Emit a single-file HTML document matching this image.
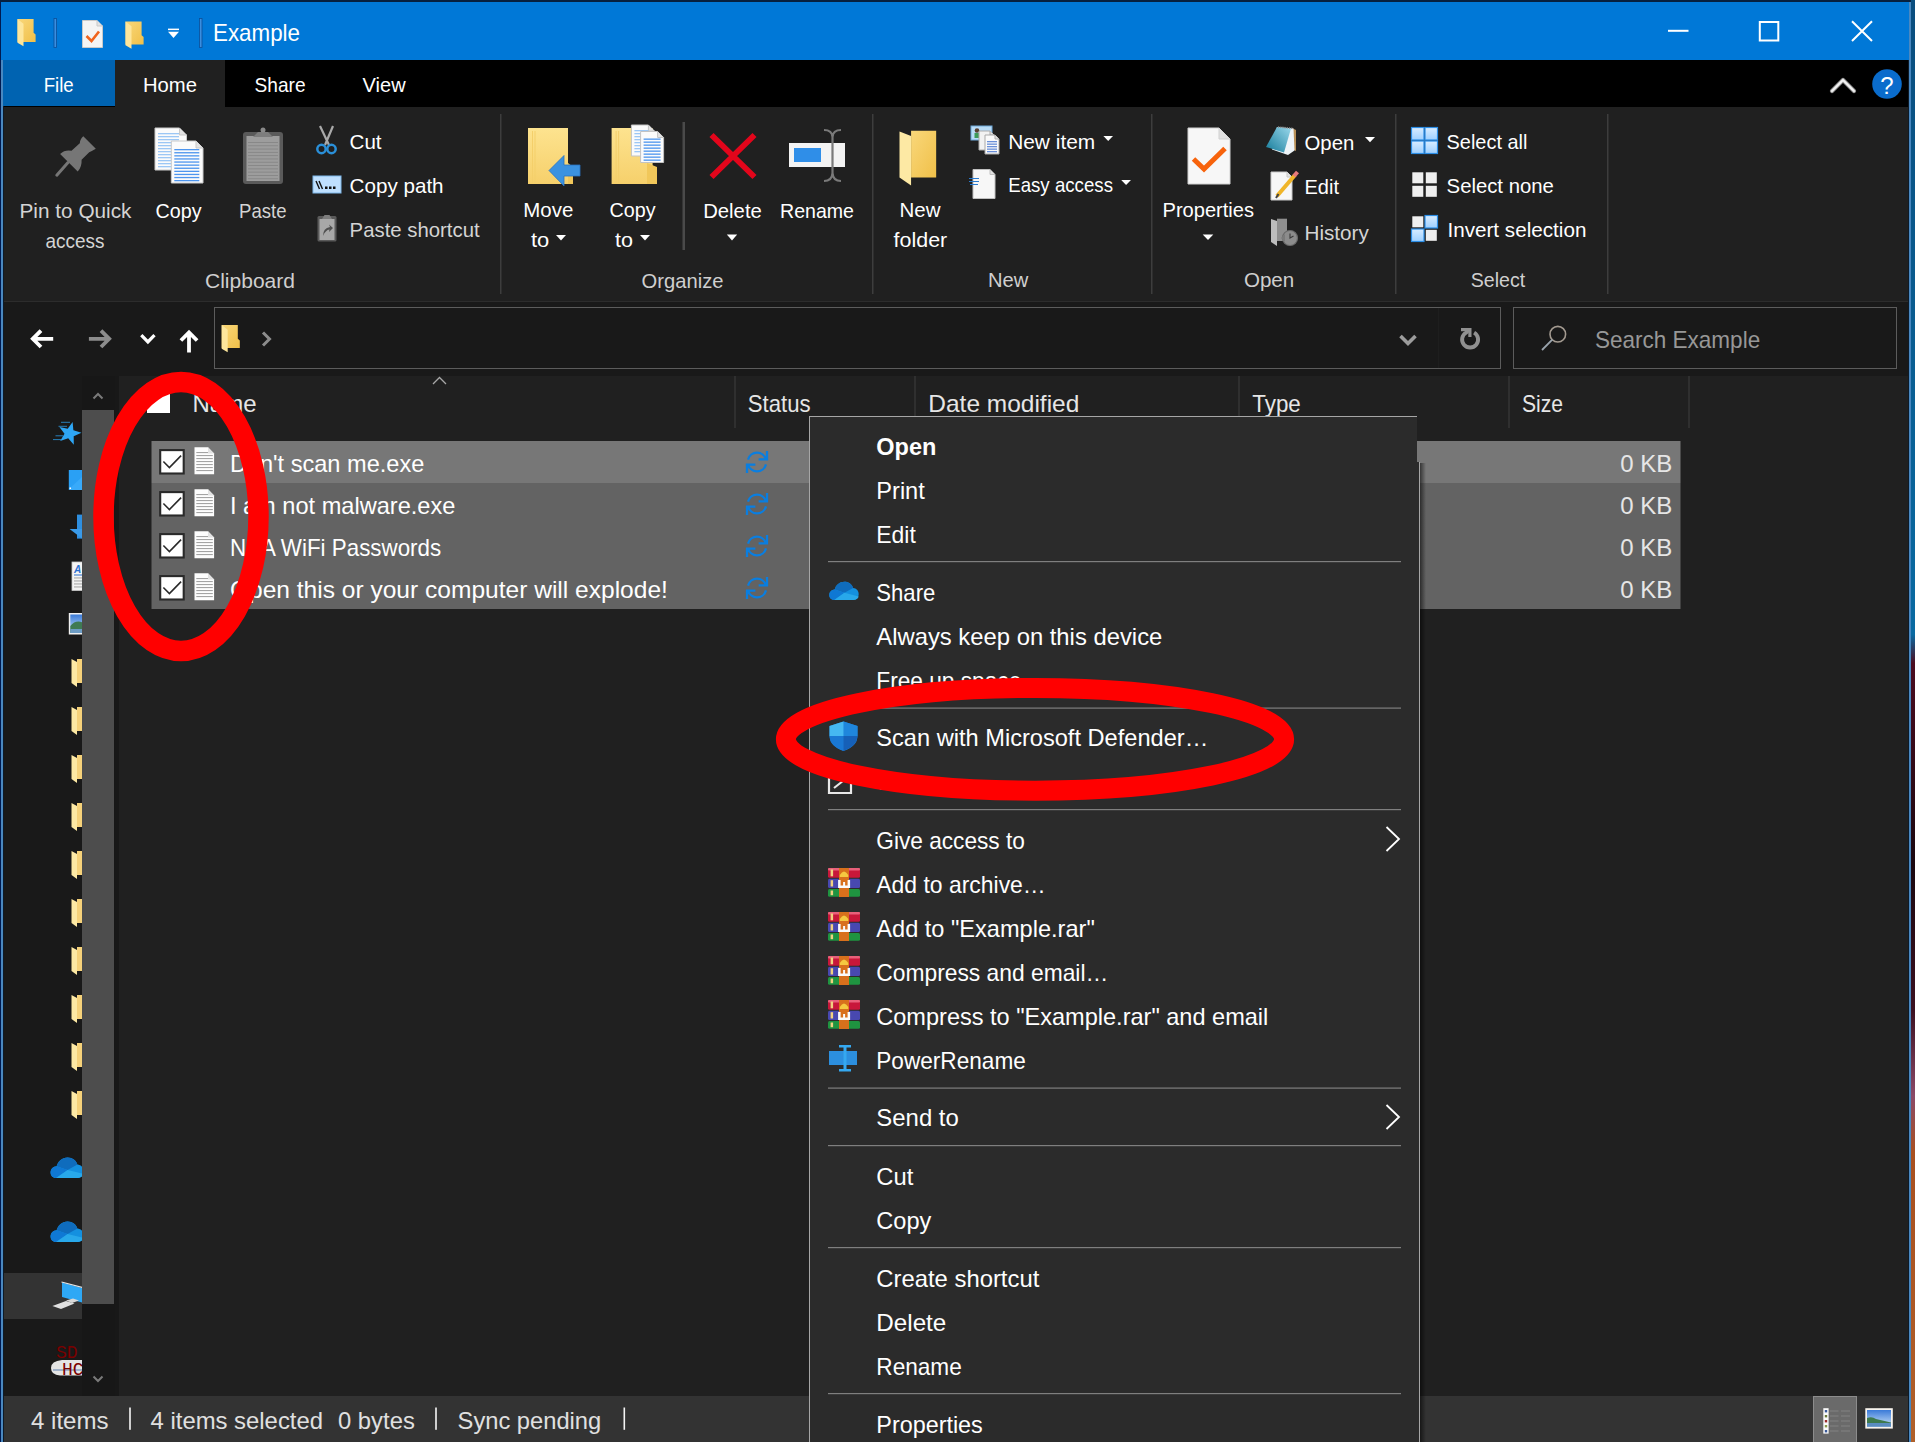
<!DOCTYPE html><html><head><meta charset="utf-8"><title>Example</title><style>html,body{margin:0;padding:0;background:#0a2a52;overflow:hidden;width:1915px;height:1442px}svg{display:block;font-family:"Liberation Sans",sans-serif}</style></head><body><svg width="1915" height="1442" viewBox="0 0 1915 1442" font-family="Liberation Sans, sans-serif"><rect x="0" y="0" width="1915" height="1442" fill="#0a2a52" /><linearGradient id="desk" x1="0" y1="0" x2="0" y2="1"><stop offset="0" stop-color="#0a4d7e"/><stop offset="0.44" stop-color="#0a6aa2"/><stop offset="0.46" stop-color="#4a0c20"/><stop offset="0.6" stop-color="#1a0810"/><stop offset="0.7" stop-color="#3a1020"/><stop offset="0.76" stop-color="#8a4a68"/><stop offset="0.8" stop-color="#a85020"/><stop offset="1" stop-color="#b0602a"/></linearGradient><rect x="1911" y="0" width="4" height="1442" fill="url(#desk)" /><rect x="0" y="2" width="1" height="1442" fill="#001a50" /><rect x="1" y="2" width="2" height="1442" fill="#4a88c0" /><rect x="3" y="2" width="1" height="1442" fill="#0d1a28" /><rect x="1908" y="2" width="1" height="1442" fill="#0d1a28" /><rect x="1909" y="2" width="2" height="1442" fill="#4a88c0" /><rect x="0" y="0" width="1911" height="2" fill="#06203f" /><rect x="1" y="2" width="1908" height="58" fill="#0078d7" /><defs><linearGradient id="fold" x1="0" y1="0" x2="1" y2="1"><stop offset="0" stop-color="#f9d77a"/><stop offset="1" stop-color="#f0c049"/></linearGradient><linearGradient id="foldbig" x1="0" y1="0" x2="0" y2="1"><stop offset="0" stop-color="#fde38f"/><stop offset="1" stop-color="#f6d06b"/></linearGradient><linearGradient id="blu" x1="0" y1="0" x2="0" y2="1"><stop offset="0" stop-color="#d8ecff"/><stop offset="1" stop-color="#9fd0ff"/></linearGradient><clipPath id="navclip"><rect x="4" y="376" width="78" height="1020"/></clipPath><linearGradient id="shield" x1="0" y1="0" x2="1" y2="1"><stop offset="0" stop-color="#4fc3f7"/><stop offset="1" stop-color="#1565c0"/></linearGradient></defs><g transform="translate(17.5,19) scale(1.0)"><path d="M0 0 H16.1 V13.7 L18.1 15.5 V23.1 H0 Z" fill="url(#fold)"/><path d="M0 0 L6 4.8 V27.3 L0 23.7 Z" fill="#fde69c"/></g><rect x="54" y="18.5" width="2.5" height="29" fill="#3a8ee0" stroke="#0a4f9a" stroke-width="0.8"/><path d="M82.5 20.5 H97.0 L102.5 26.0 V47.5 H82.5 Z" fill="#f4f4f4" stroke="#c9c9c9" stroke-width="1"/><path d="M97.0 20.5 V26.0 H102.5" fill="#e2e2e2" stroke="#c9c9c9" stroke-width="1"/><path d="M86.5 36 L91.5 41 L99 31.5" fill="none" stroke="#f0641e" stroke-width="2.6"/><g transform="translate(125.5,21.5) scale(1.0)"><path d="M0 0 H16.1 V13.7 L18.1 15.5 V23.1 H0 Z" fill="url(#fold)"/><path d="M0 0 L6 4.8 V27.3 L0 23.7 Z" fill="#fde69c"/></g><rect x="168" y="28.6" width="11" height="1.5" fill="#fff"/><path d="M168 31.8 H179 L173.5 38 Z" fill="#fff"/><rect x="199.5" y="18.5" width="2.5" height="29" fill="#3a8ee0" stroke="#0a4f9a" stroke-width="0.8"/><text x="213" y="40.6" font-size="24" fill="#fff" textLength="87" lengthAdjust="spacingAndGlyphs" >Example</text><rect x="1668" y="29.8" width="20.5" height="2" fill="#fff" /><rect x="1759.8" y="22" width="18.5" height="18.5" fill="none" stroke="#fff" stroke-width="2"/><path d="M1852 21.2 L1872 41 M1872 21.2 L1852 41" stroke="#fff" stroke-width="2"/><rect x="4" y="60" width="1904" height="47" fill="#000" /><rect x="3" y="60" width="112" height="46" fill="#0063b1" /><rect x="115" y="60" width="110" height="48" fill="#202020" /><text x="43.7" y="91.8" font-size="21" fill="#fff" textLength="30" lengthAdjust="spacingAndGlyphs" >File</text><text x="143" y="91.8" font-size="21" fill="#fff" textLength="54" lengthAdjust="spacingAndGlyphs" >Home</text><text x="254.6" y="91.8" font-size="21" fill="#fff" textLength="51" lengthAdjust="spacingAndGlyphs" >Share</text><text x="362.6" y="91.8" font-size="21" fill="#fff" textLength="43" lengthAdjust="spacingAndGlyphs" >View</text><path d="M1832 91 L1843 80 L1854 91" fill="none" stroke="#9a9a9a" stroke-width="4.2" stroke-linecap="round" stroke-linejoin="round"/><path d="M1832 91 L1843 80 L1854 91" fill="none" stroke="#f2f2f2" stroke-width="2.2" stroke-linecap="round" stroke-linejoin="round"/><circle cx="1887" cy="84" r="14.8" fill="#0a6ccc"/><text x="1887" y="93.5" font-size="24" fill="#fff" text-anchor="middle" >?</text><rect x="4" y="107" width="1904" height="194" fill="#202020" /><rect x="4" y="301" width="1904" height="1" fill="#2c2c2c" /><rect x="500" y="114" width="1.5" height="180" fill="#3d3d3d" /><rect x="872" y="114" width="1.5" height="180" fill="#3d3d3d" /><rect x="1151" y="114" width="1.5" height="180" fill="#3d3d3d" /><rect x="1395" y="114" width="1.5" height="180" fill="#3d3d3d" /><rect x="1607" y="114" width="1.5" height="180" fill="#3d3d3d" /><rect x="682.5" y="122" width="2.5" height="128" fill="#4a4a4a" /><path d="M83.3 136.2 L95.8 148.7 Q92 151 89.2 152.2 L81.6 159.8 Q82 167 77.7 171.6 L60.1 153.9 Q65 149.5 71.5 150.8 L79.8 143.2 Q80 139 83.3 136.2 Z" fill="#767676"/><path d="M68 162.6 L56.8 175.2" stroke="#767676" stroke-width="3" stroke-linecap="round"/><text x="19.5" y="217.8" font-size="21" fill="#d4d4d4" textLength="112" lengthAdjust="spacingAndGlyphs" >Pin to Quick</text><text x="45.5" y="247.5" font-size="21" fill="#d4d4d4" textLength="59" lengthAdjust="spacingAndGlyphs" >access</text><path d="M155 128 H179.5 L186.5 135 V170 H155 Z" fill="#fbfbfb" stroke="#c9c9c9" stroke-width="1"/><path d="M179.5 128 V135 H186.5" fill="#e2e2e2" stroke="#c9c9c9" stroke-width="1"/><rect x="158" y="133" width="21" height="1.3" fill="#9cc7f5"/><rect x="158" y="136" width="21" height="1.3" fill="#9cc7f5"/><rect x="158" y="139" width="21" height="1.3" fill="#9cc7f5"/><rect x="158" y="142" width="21" height="1.3" fill="#9cc7f5"/><rect x="158" y="145" width="21" height="1.3" fill="#9cc7f5"/><rect x="158" y="148" width="21" height="1.3" fill="#9cc7f5"/><rect x="158" y="151" width="21" height="1.3" fill="#9cc7f5"/><rect x="158" y="154" width="21" height="1.3" fill="#9cc7f5"/><rect x="158" y="157" width="21" height="1.3" fill="#9cc7f5"/><rect x="158" y="160" width="21" height="1.3" fill="#9cc7f5"/><rect x="158" y="163" width="21" height="1.3" fill="#9cc7f5"/><rect x="158" y="166" width="21" height="1.3" fill="#9cc7f5"/><path d="M171.3 141 H196.0 L203.0 148 V183 H171.3 Z" fill="#fbfbfb" stroke="#c9c9c9" stroke-width="1"/><path d="M196.0 141 V148 H203.0" fill="#e2e2e2" stroke="#c9c9c9" stroke-width="1"/><rect x="174.3" y="149.0" width="25" height="1.3" fill="#4d95ee"/><rect x="174.3" y="152.1" width="25" height="1.3" fill="#4d95ee"/><rect x="174.3" y="155.2" width="25" height="1.3" fill="#4d95ee"/><rect x="174.3" y="158.3" width="25" height="1.3" fill="#4d95ee"/><rect x="174.3" y="161.4" width="25" height="1.3" fill="#4d95ee"/><rect x="174.3" y="164.5" width="25" height="1.3" fill="#4d95ee"/><rect x="174.3" y="167.6" width="25" height="1.3" fill="#4d95ee"/><rect x="174.3" y="170.7" width="25" height="1.3" fill="#4d95ee"/><rect x="174.3" y="173.8" width="25" height="1.3" fill="#4d95ee"/><rect x="174.3" y="176.9" width="25" height="1.3" fill="#4d95ee"/><rect x="174.3" y="180.0" width="25" height="1.3" fill="#4d95ee"/><text x="155.5" y="217.8" font-size="21" fill="#ffffff" textLength="46" lengthAdjust="spacingAndGlyphs" >Copy</text><rect x="243" y="132" width="40" height="52" rx="3" fill="#5a5a5a"/><rect x="246.5" y="136" width="33" height="45" fill="#9d9d9d"/><rect x="248" y="142.0" width="30" height="0.9" fill="#868686" /><rect x="248" y="145.3" width="30" height="0.9" fill="#868686" /><rect x="248" y="148.6" width="30" height="0.9" fill="#868686" /><rect x="248" y="151.9" width="30" height="0.9" fill="#868686" /><rect x="248" y="155.2" width="30" height="0.9" fill="#868686" /><rect x="248" y="158.5" width="30" height="0.9" fill="#868686" /><rect x="248" y="161.8" width="30" height="0.9" fill="#868686" /><rect x="248" y="165.1" width="30" height="0.9" fill="#868686" /><rect x="248" y="168.4" width="30" height="0.9" fill="#868686" /><rect x="248" y="171.7" width="30" height="0.9" fill="#868686" /><rect x="248" y="175.0" width="30" height="0.9" fill="#868686" /><rect x="248" y="178.3" width="30" height="0.9" fill="#868686" /><path d="M253 137 L258 132 H268 L273 137 Z" fill="#7d7d7d"/><circle cx="263" cy="130" r="2.5" fill="#8a8a8a"/><text x="239" y="217.5" font-size="21" fill="#d4d4d4" textLength="47.5" lengthAdjust="spacingAndGlyphs" >Paste</text><path d="M320 126 L329 145 M333 126 L325 145" stroke="#a9a9a9" stroke-width="2.2"/><circle cx="321.5" cy="149" r="4.2" fill="none" stroke="#2a8fd8" stroke-width="2.5"/><circle cx="331.5" cy="149" r="4.2" fill="none" stroke="#2a8fd8" stroke-width="2.5"/><text x="349.6" y="148.8" font-size="21" fill="#ffffff" textLength="32" lengthAdjust="spacingAndGlyphs" >Cut</text><rect x="313" y="176" width="28" height="17" fill="#bfe0ff" stroke="#7fb8ea" stroke-width="1"/><path d="M316 181 L319.5 189 M319 181 L322.5 189" stroke="#111" stroke-width="1.4"/><rect x="325" y="186.5" width="2.5" height="2.5" fill="#111" /><rect x="329" y="186.5" width="2.5" height="2.5" fill="#111" /><rect x="333" y="186.5" width="2.5" height="2.5" fill="#111" /><text x="349.6" y="192.5" font-size="21" fill="#ffffff" textLength="94" lengthAdjust="spacingAndGlyphs" >Copy path</text><rect x="317.5" y="216" width="19" height="25.5" rx="1.5" fill="#5a5a5a"/><rect x="319.5" y="219" width="15" height="21" fill="#a8a8a8"/><path d="M322 219 L324.5 215 H329.5 L332 219 Z" fill="#7d7d7d"/><path d="M323 236 Q323 228 330 227 L329 224.5 L333 228 L329 232 L329.5 229.5 Q325.5 230 323 236 Z" fill="#505050"/><text x="349.6" y="236.5" font-size="21" fill="#d4d4d4" textLength="130" lengthAdjust="spacingAndGlyphs" >Paste shortcut</text><text x="205.0" y="288" font-size="21" fill="#cfcfcf" textLength="90" lengthAdjust="spacingAndGlyphs" >Clipboard</text><rect x="528" y="128" width="40" height="56" fill="url(#foldbig)"/><rect x="532" y="131" width="1" height="52" fill="#f4cf6a"/><rect x="534.5" y="131" width="1" height="52" fill="#f4cf6a"/><path d="M568 128 V163 L573 167 V184 H568 Z" fill="#f1c75a"/><path d="M549 170.5 L564 155.5 V165 H580 V176 H564 V186 Z" fill="#3b92e0" stroke="#2a72c0" stroke-width="0.8"/><text x="523.3" y="217.4" font-size="21" fill="#ffffff" textLength="50" lengthAdjust="spacingAndGlyphs" >Move</text><text x="531" y="247" font-size="21" fill="#ffffff" textLength="18.3" lengthAdjust="spacingAndGlyphs" >to</text><path d="M556.0 235 H566.0 L561 240.5 Z" fill="#fff"/><rect x="611.6" y="128" width="41" height="56" fill="url(#foldbig)"/><rect x="615.6" y="131" width="1" height="52" fill="#f4cf6a"/><rect x="618.1" y="131" width="1" height="52" fill="#f4cf6a"/><path d="M647 145 V163 L657 167 V184 H647 Z" fill="#f1c75a"/><path d="M631.4 125 H648.4 L654.4 131 V156 H631.4 Z" fill="#fbfbfb" stroke="#c3c3c3" stroke-width="1"/><path d="M648.4 125 V131 H654.4" fill="#e2e2e2" stroke="#c3c3c3" stroke-width="1"/><rect x="634.4" y="130" width="14" height="1.3" fill="#9cc7f5"/><rect x="634.4" y="133" width="14" height="1.3" fill="#9cc7f5"/><rect x="634.4" y="136" width="14" height="1.3" fill="#9cc7f5"/><rect x="634.4" y="139" width="14" height="1.3" fill="#9cc7f5"/><rect x="634.4" y="142" width="14" height="1.3" fill="#9cc7f5"/><rect x="634.4" y="145" width="14" height="1.3" fill="#9cc7f5"/><rect x="634.4" y="148" width="14" height="1.3" fill="#9cc7f5"/><rect x="634.4" y="151" width="14" height="1.3" fill="#9cc7f5"/><path d="M640.6 131.5 H657.6 L663.6 137.5 V162.5 H640.6 Z" fill="#fbfbfb" stroke="#c3c3c3" stroke-width="1"/><path d="M657.6 131.5 V137.5 H663.6" fill="#e2e2e2" stroke="#c3c3c3" stroke-width="1"/><rect x="643.6" y="138.5" width="17" height="1.3" fill="#4d95ee"/><rect x="643.6" y="141.5" width="17" height="1.3" fill="#4d95ee"/><rect x="643.6" y="144.5" width="17" height="1.3" fill="#4d95ee"/><rect x="643.6" y="147.5" width="17" height="1.3" fill="#4d95ee"/><rect x="643.6" y="150.5" width="17" height="1.3" fill="#4d95ee"/><rect x="643.6" y="153.5" width="17" height="1.3" fill="#4d95ee"/><rect x="643.6" y="156.5" width="17" height="1.3" fill="#4d95ee"/><rect x="643.6" y="159.5" width="17" height="1.3" fill="#4d95ee"/><text x="609.6" y="217.4" font-size="21" fill="#ffffff" textLength="46" lengthAdjust="spacingAndGlyphs" >Copy</text><text x="615" y="247" font-size="21" fill="#ffffff" textLength="18" lengthAdjust="spacingAndGlyphs" >to</text><path d="M640.0 235 H650.0 L645 240.5 Z" fill="#fff"/><path d="M711.5 135 L754.5 177 M754.5 135 L711.5 177" stroke="#e3051b" stroke-width="5.8"/><text x="703.2" y="217.5" font-size="21" fill="#ffffff" textLength="58.6" lengthAdjust="spacingAndGlyphs" >Delete</text><path d="M726.85 234.5 H737.15 L732 240.4 Z" fill="#fff"/><rect x="789" y="143" width="56" height="24" fill="#f3f3f3"/><rect x="794" y="148" width="27" height="14" fill="#2f8ee8"/><path d="M824 130 Q832 130 832.5 137 V173 Q832 181 824 181 M841 130 Q833 130 832.5 137 M841 181 Q833 181 832.5 173" fill="none" stroke="#7a7a7a" stroke-width="2.2"/><text x="780" y="217.5" font-size="21" fill="#ffffff" textLength="74" lengthAdjust="spacingAndGlyphs" >Rename</text><text x="641.5" y="288" font-size="21" fill="#cfcfcf" textLength="82" lengthAdjust="spacingAndGlyphs" >Organize</text><g transform="translate(899.5,130.8) scale(1.93,2.03)"><path d="M6 0 H19 V15.5 L19 16.2 V23 H6 Z" fill="url(#fold)"/><path d="M0 0.3 L6 2.5 V27 L0 23 Z" fill="#fde9a4"/></g><text x="899.5" y="217" font-size="21" fill="#ffffff" textLength="41" lengthAdjust="spacingAndGlyphs" >New</text><text x="893.6" y="247" font-size="21" fill="#ffffff" textLength="53.6" lengthAdjust="spacingAndGlyphs" >folder</text><rect x="971" y="126" width="21" height="14" fill="#b9dcf7" stroke="#6fa7d8" stroke-width="1"/><circle cx="977" cy="130.5" r="2.3" fill="#5a4030"/><rect x="974.5" y="133" width="5" height="5" fill="#3e9a5a"/><path d="M979 131 H990 L994 135 V150 H979 Z" fill="#f2f2f2" stroke="#aaa" stroke-width="1"/><path d="M990 131 V135 H994" fill="#e2e2e2" stroke="#aaa" stroke-width="1"/><path d="M985 135 H995 L999 139 V154 H985 Z" fill="#fafafa" stroke="#aaa" stroke-width="1"/><path d="M995 135 V139 H999" fill="#e2e2e2" stroke="#aaa" stroke-width="1"/><rect x="987" y="141.0" width="10" height="1.3" fill="#6a8fd8"/><rect x="987" y="143.5" width="10" height="1.3" fill="#6a8fd8"/><rect x="987" y="146.0" width="10" height="1.3" fill="#6a8fd8"/><rect x="987" y="148.5" width="10" height="1.3" fill="#6a8fd8"/><rect x="987" y="151.0" width="10" height="1.3" fill="#6a8fd8"/><text x="1008.2" y="149" font-size="21" fill="#ffffff" textLength="87" lengthAdjust="spacingAndGlyphs" >New item</text><path d="M1103.4 136 H1113.0 L1108.2 141 Z" fill="#fff"/><path d="M973 169.5 H990 L995 174.5 V198.5 H973 Z" fill="#f7f7f7" stroke="#c0c0c0" stroke-width="1"/><path d="M990 169.5 V174.5 H995" fill="#e2e2e2" stroke="#c0c0c0" stroke-width="1"/><path d="M969 181.5 H979 M970 184.5 H978 M969 178.5 H979" stroke="#2a7bd0" stroke-width="1.2"/><text x="1008.2" y="191.8" font-size="21" fill="#ffffff" textLength="104.8" lengthAdjust="spacingAndGlyphs" >Easy access</text><path d="M1121.25 180 H1130.9499999999998 L1126.1 185 Z" fill="#fff"/><text x="987.95" y="287" font-size="21" fill="#cfcfcf" textLength="40.3" lengthAdjust="spacingAndGlyphs" >New</text><path d="M1188 128 H1219 L1230 139 V184 H1188 Z" fill="#f7f7f7" stroke="#d0d0d0" stroke-width="1"/><path d="M1219 128 V139 H1230" fill="#e2e2e2" stroke="#d0d0d0" stroke-width="1"/><path d="M1193.5 159 L1204 169 L1225 148.5" fill="none" stroke="#f7630c" stroke-width="5"/><text x="1162.5" y="217.4" font-size="21" fill="#ffffff" textLength="91.5" lengthAdjust="spacingAndGlyphs" >Properties</text><path d="M1202.7 234.5 H1213.3 L1208 240.0 Z" fill="#fff"/><linearGradient id="teal" x1="0" y1="1" x2="1" y2="0"><stop offset="0" stop-color="#137a98"/><stop offset="1" stop-color="#9ad8ec"/></linearGradient><path d="M1292 128 L1296 130 L1296 151 L1292 149 Z" fill="#b89058"/><path d="M1277 127 L1293.5 128.5 L1294.5 150.5 L1288 155 L1272 149.5 Z" fill="#eef4f8"/><path d="M1277 127 L1291 128.5 L1284 152.5 L1266 147 Z" fill="url(#teal)"/><path d="M1278 127 L1293 128.4" stroke="#8a8a8a" stroke-width="1.6" stroke-dasharray="1.2 1"/><text x="1304.5" y="149.5" font-size="21" fill="#ffffff" textLength="49.8" lengthAdjust="spacingAndGlyphs" >Open</text><path d="M1365.0 137 H1375.0 L1370 142.3 Z" fill="#fff"/><path d="M1271 172 H1287 L1292 177 V200 H1271 Z" fill="#f7f7f7" stroke="#c8c8c8" stroke-width="1"/><path d="M1287 172 V177 H1292" fill="#e2e2e2" stroke="#c8c8c8" stroke-width="1"/><path d="M1277 196 L1295 175" stroke="#f0b529" stroke-width="4"/><path d="M1294 176 L1297.5 172" stroke="#e77a7a" stroke-width="4"/><path d="M1276 198 L1278.5 194" stroke="#444" stroke-width="2"/><text x="1304.5" y="194.3" font-size="21" fill="#ffffff" textLength="34.5" lengthAdjust="spacingAndGlyphs" >Edit</text><path d="M1271 219 L1277 221 V246 L1271 242 Z" fill="#bdbdbd"/><path d="M1277 218.7 H1287 V241 H1277 Z" fill="#8f8f8f"/><circle cx="1290" cy="238" r="7.5" fill="#8c8c8c" stroke="#6a6a6a" stroke-width="1.2"/><path d="M1290 233.5 V238 L1293.5 236" stroke="#3a3a3a" stroke-width="1.1" fill="none"/><path d="M1281 238 L1285 234 V242 Z" fill="#7a7a7a"/><text x="1304.5" y="239.8" font-size="21" fill="#d4d4d4" textLength="64.3" lengthAdjust="spacingAndGlyphs" >History</text><text x="1243.9499999999998" y="287.3" font-size="21" fill="#cfcfcf" textLength="50.3" lengthAdjust="spacingAndGlyphs" >Open</text><rect x="1411.5" y="127.5" width="12.5" height="12.5" fill="url(#blu)" stroke="#2c8ee6" stroke-width="1.2"/><rect x="1425.0" y="127.5" width="12.5" height="12.5" fill="url(#blu)" stroke="#2c8ee6" stroke-width="1.2"/><rect x="1411.5" y="141.0" width="12.5" height="12.5" fill="url(#blu)" stroke="#2c8ee6" stroke-width="1.2"/><rect x="1425.0" y="141.0" width="12.5" height="12.5" fill="url(#blu)" stroke="#2c8ee6" stroke-width="1.2"/><text x="1446.6" y="148.9" font-size="21" fill="#ffffff" textLength="80.8" lengthAdjust="spacingAndGlyphs" >Select all</text><rect x="1412.3" y="172.3" width="11" height="11" fill="#efefef"/><rect x="1425.8" y="172.3" width="11" height="11" fill="#efefef"/><rect x="1412.3" y="185.8" width="11" height="11" fill="#efefef"/><rect x="1425.8" y="185.8" width="11" height="11" fill="#efefef"/><text x="1446.6" y="192.7" font-size="21" fill="#ffffff" textLength="107.2" lengthAdjust="spacingAndGlyphs" >Select none</text><rect x="1412.3" y="216.3" width="11" height="11" fill="#efefef"/><rect x="1425.0" y="215.5" width="12.5" height="12.5" fill="url(#blu)" stroke="#2c8ee6" stroke-width="1.2"/><rect x="1411.5" y="229.0" width="12.5" height="12.5" fill="url(#blu)" stroke="#2c8ee6" stroke-width="1.2"/><rect x="1425.8" y="229.8" width="11" height="11" fill="#efefef"/><text x="1447.4" y="236.7" font-size="21" fill="#ffffff" textLength="139" lengthAdjust="spacingAndGlyphs" >Invert selection</text><text x="1470.8" y="287.2" font-size="21" fill="#cfcfcf" textLength="54.4" lengthAdjust="spacingAndGlyphs" >Select</text><rect x="4" y="302" width="1904" height="74" fill="#191919" /><path d="M53.2 338.8 H33 M41 330.6 L32.8 338.8 L41 347" fill="none" stroke="#fff" stroke-width="3.8"/><path d="M88.9 338.8 H109 M101 330.6 L109.2 338.8 L101 347" fill="none" stroke="#8c8c8c" stroke-width="3.8"/><path d="M141.3 335.2 L147.9 341.8 L154.5 335.2" fill="none" stroke="#fff" stroke-width="3.3"/><path d="M189 352.4 V332.5 M180.9 340.5 L189 332.4 L197.1 340.5" fill="none" stroke="#fff" stroke-width="3.8"/><rect x="214.5" y="307.5" width="1286" height="61" fill="#191919" stroke="#5c5c5c" stroke-width="1"/><rect x="1438" y="308" width="1" height="60" fill="#1e1e1e" /><g transform="translate(221.7,325) scale(1.0)"><path d="M0 0 H16.1 V13.7 L18.1 15.5 V23.1 H0 Z" fill="url(#fold)"/><path d="M0 0 L6 4.8 V27.3 L0 23.7 Z" fill="#fde69c"/></g><path d="M263 332.5 L269.5 339 L263 345.5" fill="none" stroke="#8c8c8c" stroke-width="3"/><path d="M1400.5 336 L1408 343.5 L1415.5 336" fill="none" stroke="#9c9c9c" stroke-width="3.6"/><path d="M1474.1 332.6 A8 8 0 1 1 1466.1 332.6 L1469 329.6" fill="none" stroke="#909090" stroke-width="3.9"/><path d="M1461 329.6 H1469.9 V337" fill="none" stroke="#909090" stroke-width="3.2"/><rect x="1513.5" y="307.5" width="383" height="61" fill="#191919" stroke="#5c5c5c" stroke-width="1"/><circle cx="1557.8" cy="334.2" r="7.8" fill="none" stroke="#a39a90" stroke-width="1.6"/><path d="M1552.3 339.7 L1542 350" stroke="#9aa4ad" stroke-width="1.8"/><text x="1594.9" y="347.6" font-size="24" fill="#979797" textLength="165.3" lengthAdjust="spacingAndGlyphs" >Search Example</text><rect x="4" y="376" width="113" height="1020" fill="#191919" /><rect x="82" y="376" width="33" height="1020" fill="#171717" /><rect x="82" y="410" width="32" height="894" fill="#4d4d4d" /><rect x="115" y="376" width="4" height="1020" fill="#181818" /><path d="M93.5 398.5 L98 394 L102.5 398.5" fill="none" stroke="#7a7a7a" stroke-width="2"/><path d="M93.5 1376.5 L98 1381 L102.5 1376.5" fill="none" stroke="#7a7a7a" stroke-width="2"/><rect x="4" y="1273" width="78" height="46" fill="#333333" /><g clip-path="url(#navclip)"><path d="M72.61 421.91 L73.39 430.35 L81.48 432.87 L73.69 436.22 L73.80 444.70 L68.21 438.33 L60.17 441.05 L64.51 433.76 L59.44 426.96 L67.71 428.83 Z" fill="#2ea6f5"/><path d="M61 422.3 H70 M58.5 426.3 H67 M55.5 435.8 H63 M53 439.6 H61" stroke="#2ea6f5" stroke-width="0.9" opacity="0.8"/><rect x="68.8" y="470" width="14" height="20" fill="#2aa0f5"/><path d="M69 489 L83 476 V490 H69 Z" fill="#45b4ff" opacity="0.5"/><rect x="69.5" y="487.5" width="1.5" height="1.5" fill="#fff"/><rect x="77" y="514.6" width="5" height="24" fill="#2e8fe0"/><path d="M69.6 529 H82 V538.6 Z" fill="#3a9ae8"/><rect x="72" y="562" width="12" height="28.5" fill="#f4f4f4" stroke="#c8c8c8" stroke-width="0.8"/><text x="74" y="573" font-size="10" fill="#2a6fd0" font-style="italic" font-weight="700">A</text><rect x="74" y="574.5" width="9" height="1" fill="#2a6fd0"/><rect x="74" y="577.5" width="9" height="0.9" fill="#9a9a9a"/><rect x="74" y="580.5" width="9" height="0.9" fill="#9a9a9a"/><rect x="74" y="583.5" width="9" height="0.9" fill="#9a9a9a"/><rect x="74" y="586.5" width="9" height="0.9" fill="#9a9a9a"/><linearGradient id="sky" x1="0" y1="0" x2="0" y2="1"><stop offset="0" stop-color="#3a7ad8"/><stop offset="1" stop-color="#cfe6fa"/></linearGradient><rect x="68.8" y="613" width="15" height="21.5" fill="#f0f0f0"/><rect x="70.3" y="614.5" width="13" height="18.5" fill="url(#sky)"/><path d="M70.3 626 Q76 619 84 623 V633 H70.3 Z" fill="#3f7a52"/><rect x="70.3" y="629" width="13" height="4" fill="#6d9cc4"/><path d="M71.5 659 L77 662 V687 L71.5 683 Z" fill="#fde9a4"/><rect x="77" y="659" width="10" height="24" fill="#f6d27a"/><path d="M71.5 707 L77 710 V735 L71.5 731 Z" fill="#fde9a4"/><rect x="77" y="707" width="10" height="24" fill="#f6d27a"/><path d="M71.5 755 L77 758 V783 L71.5 779 Z" fill="#fde9a4"/><rect x="77" y="755" width="10" height="24" fill="#f6d27a"/><path d="M71.5 803 L77 806 V831 L71.5 827 Z" fill="#fde9a4"/><rect x="77" y="803" width="10" height="24" fill="#f6d27a"/><path d="M71.5 851 L77 854 V879 L71.5 875 Z" fill="#fde9a4"/><rect x="77" y="851" width="10" height="24" fill="#f6d27a"/><path d="M71.5 899 L77 902 V927 L71.5 923 Z" fill="#fde9a4"/><rect x="77" y="899" width="10" height="24" fill="#f6d27a"/><path d="M71.5 947 L77 950 V975 L71.5 971 Z" fill="#fde9a4"/><rect x="77" y="947" width="10" height="24" fill="#f6d27a"/><path d="M71.5 995 L77 998 V1023 L71.5 1019 Z" fill="#fde9a4"/><rect x="77" y="995" width="10" height="24" fill="#f6d27a"/><path d="M71.5 1043 L77 1046 V1071 L71.5 1067 Z" fill="#fde9a4"/><rect x="77" y="1043" width="10" height="24" fill="#f6d27a"/><path d="M71.5 1091 L77 1094 V1119 L71.5 1115 Z" fill="#fde9a4"/><rect x="77" y="1091" width="10" height="24" fill="#f6d27a"/><g transform="translate(50.6,1157) scale(1.0)"><path d="M5.5 21 C2 21 0 18.5 0 15.5 C0 12 2.5 9.5 6 9.3 C7.5 4 11.5 0.5 17 0.5 C22 0.5 25.5 3.5 26.8 7.5 C30.5 7.8 33 10.5 33 14.3 C33 18 30.5 21 27 21 Z" fill="#1490df"/><path d="M6 9.3 C7.5 4 11.5 0.5 17 0.5 C22 0.5 25.5 3.5 26.8 7.5 L17 13 Z" fill="#0f6cbd"/><path d="M0 15.5 C0 12 2.5 9.5 6 9.3 L17 13 L5.5 21 C2 21 0 18.5 0 15.5 Z" fill="#0f78d4"/><path d="M5.5 21 L17 13 L33 17 C32.5 19.5 30 21 27 21 Z" fill="#28a8ea"/></g><g transform="translate(50.6,1221) scale(1.0)"><path d="M5.5 21 C2 21 0 18.5 0 15.5 C0 12 2.5 9.5 6 9.3 C7.5 4 11.5 0.5 17 0.5 C22 0.5 25.5 3.5 26.8 7.5 C30.5 7.8 33 10.5 33 14.3 C33 18 30.5 21 27 21 Z" fill="#1490df"/><path d="M6 9.3 C7.5 4 11.5 0.5 17 0.5 C22 0.5 25.5 3.5 26.8 7.5 L17 13 Z" fill="#0f6cbd"/><path d="M0 15.5 C0 12 2.5 9.5 6 9.3 L17 13 L5.5 21 C2 21 0 18.5 0 15.5 Z" fill="#0f78d4"/><path d="M5.5 21 L17 13 L33 17 C32.5 19.5 30 21 27 21 Z" fill="#28a8ea"/></g><path d="M62 1282.5 L84 1288.5 V1303 L62 1297 Z" fill="#2ea8f5"/><path d="M61.5 1282 L84 1288" stroke="#e8e8e8" stroke-width="1.2"/><path d="M52.4 1306 L66 1301 L74.5 1303.5 L61 1309 Z" fill="#e0e0e0"/><path d="M66 1300.5 L73 1298.5 L79 1300.5 L72 1303 Z" fill="#d8d8d8"/><path d="M51 1368 Q51 1361 62 1360 H84 V1375.5 H60 Q51 1375 51 1368 Z" fill="#e4e4e4"/><path d="M53 1370 H84" stroke="#8aa0c0" stroke-width="1.5"/><text x="56" y="1357.7" font-family="Liberation Mono, monospace" font-size="18" fill="#7a0000">SD</text><text x="62" y="1374.5" font-family="Liberation Mono, monospace" font-size="18" fill="#7a0000">HC</text></g><rect x="119" y="376" width="1789" height="1020" fill="#202020" /><rect x="734.5" y="376" width="1" height="52" fill="#3e3e3e" /><rect x="914.5" y="376" width="1" height="52" fill="#3e3e3e" /><rect x="1238.5" y="376" width="1" height="52" fill="#3e3e3e" /><rect x="1508.5" y="376" width="1" height="52" fill="#3e3e3e" /><rect x="1688.5" y="376" width="1" height="52" fill="#3e3e3e" /><path d="M433 384 L439.5 377.5 L446 384" fill="none" stroke="#a8a8a8" stroke-width="1.3"/><rect x="147" y="393" width="23" height="20" fill="#fff" /><rect x="147" y="393" width="23" height="1" fill="#fff" /><text x="192.5" y="411.6" font-size="24" fill="#e6e6e6" textLength="64" lengthAdjust="spacingAndGlyphs" >Name</text><text x="747.8" y="411.7" font-size="24" fill="#e6e6e6" textLength="62.8" lengthAdjust="spacingAndGlyphs" >Status</text><text x="928.3" y="411.7" font-size="24" fill="#e6e6e6" textLength="151" lengthAdjust="spacingAndGlyphs" >Date modified</text><text x="1252.3" y="411.7" font-size="24" fill="#e6e6e6" textLength="48.5" lengthAdjust="spacingAndGlyphs" >Type</text><text x="1521.9" y="411.7" font-size="24" fill="#e6e6e6" textLength="41.1" lengthAdjust="spacingAndGlyphs" >Size</text><rect x="151.5" y="441" width="1529" height="42" fill="#777777" /><rect x="160.2" y="450.1" width="23.5" height="23.4" fill="#fff" stroke="#2a2a2a" stroke-width="2.1"/><path d="M163.4 461.5 L169.4 467.5 L181.1 455.6" fill="none" stroke="#2a2a2a" stroke-width="1.6"/><path d="M194.5 447.3 H208 L214.1 453.4 V474.2 H194.5 Z" fill="#fdfdfd"/><path d="M208 447.3 V453.4 H214.1 Z" fill="#e2e2e2"/><rect x="196.3" y="452" width="11.7" height="1.1" fill="#a4a4a4"/><rect x="196.3" y="455" width="16.5" height="1.1" fill="#a4a4a4"/><rect x="196.3" y="458" width="16.5" height="1.1" fill="#a4a4a4"/><rect x="196.3" y="461" width="16.5" height="1.1" fill="#a4a4a4"/><rect x="196.3" y="464" width="16.5" height="1.1" fill="#a4a4a4"/><rect x="196.3" y="467" width="16.5" height="1.1" fill="#a4a4a4"/><rect x="196.3" y="470" width="16.5" height="1.1" fill="#a4a4a4"/><text x="229.9" y="471.5" font-size="24" fill="#fff" textLength="194.4" lengthAdjust="spacingAndGlyphs" >Don't scan me.exe</text><path d="M748 459.6 A9.3 9.3 0 0 1 766 459.6 M758.6 459.3 H767 V451" fill="none" stroke="#0a7ee0" stroke-width="2.3"/><path d="M766 464.4 A9.3 9.3 0 0 1 748 464.4 M755.4 464.7 H747 V473" fill="none" stroke="#0a7ee0" stroke-width="2.3"/><text x="1672.2" y="471.7" font-size="24" fill="#e6e6e6" text-anchor="end" >0 KB</text><rect x="151.5" y="483" width="1529" height="42" fill="#636363" /><rect x="160.2" y="492.1" width="23.5" height="23.4" fill="#fff" stroke="#2a2a2a" stroke-width="2.1"/><path d="M163.4 503.5 L169.4 509.5 L181.1 497.6" fill="none" stroke="#2a2a2a" stroke-width="1.6"/><path d="M194.5 489.3 H208 L214.1 495.4 V516.2 H194.5 Z" fill="#fdfdfd"/><path d="M208 489.3 V495.4 H214.1 Z" fill="#e2e2e2"/><rect x="196.3" y="494" width="11.7" height="1.1" fill="#a4a4a4"/><rect x="196.3" y="497" width="16.5" height="1.1" fill="#a4a4a4"/><rect x="196.3" y="500" width="16.5" height="1.1" fill="#a4a4a4"/><rect x="196.3" y="503" width="16.5" height="1.1" fill="#a4a4a4"/><rect x="196.3" y="506" width="16.5" height="1.1" fill="#a4a4a4"/><rect x="196.3" y="509" width="16.5" height="1.1" fill="#a4a4a4"/><rect x="196.3" y="512" width="16.5" height="1.1" fill="#a4a4a4"/><text x="229.9" y="513.5" font-size="24" fill="#fff" textLength="225.5" lengthAdjust="spacingAndGlyphs" >I am not malware.exe</text><path d="M748 501.6 A9.3 9.3 0 0 1 766 501.6 M758.6 501.3 H767 V493" fill="none" stroke="#0a7ee0" stroke-width="2.3"/><path d="M766 506.4 A9.3 9.3 0 0 1 748 506.4 M755.4 506.7 H747 V515" fill="none" stroke="#0a7ee0" stroke-width="2.3"/><text x="1672.2" y="513.7" font-size="24" fill="#e6e6e6" text-anchor="end" >0 KB</text><rect x="151.5" y="525" width="1529" height="42" fill="#636363" /><rect x="160.2" y="534.1" width="23.5" height="23.4" fill="#fff" stroke="#2a2a2a" stroke-width="2.1"/><path d="M163.4 545.5 L169.4 551.5 L181.1 539.6" fill="none" stroke="#2a2a2a" stroke-width="1.6"/><path d="M194.5 531.3 H208 L214.1 537.4 V558.2 H194.5 Z" fill="#fdfdfd"/><path d="M208 531.3 V537.4 H214.1 Z" fill="#e2e2e2"/><rect x="196.3" y="536" width="11.7" height="1.1" fill="#a4a4a4"/><rect x="196.3" y="539" width="16.5" height="1.1" fill="#a4a4a4"/><rect x="196.3" y="542" width="16.5" height="1.1" fill="#a4a4a4"/><rect x="196.3" y="545" width="16.5" height="1.1" fill="#a4a4a4"/><rect x="196.3" y="548" width="16.5" height="1.1" fill="#a4a4a4"/><rect x="196.3" y="551" width="16.5" height="1.1" fill="#a4a4a4"/><rect x="196.3" y="554" width="16.5" height="1.1" fill="#a4a4a4"/><text x="229.9" y="555.5" font-size="24" fill="#fff" textLength="211.3" lengthAdjust="spacingAndGlyphs" >NSA WiFi Passwords</text><path d="M748 543.6 A9.3 9.3 0 0 1 766 543.6 M758.6 543.3 H767 V535" fill="none" stroke="#0a7ee0" stroke-width="2.3"/><path d="M766 548.4 A9.3 9.3 0 0 1 748 548.4 M755.4 548.7 H747 V557" fill="none" stroke="#0a7ee0" stroke-width="2.3"/><text x="1672.2" y="555.7" font-size="24" fill="#e6e6e6" text-anchor="end" >0 KB</text><rect x="151.5" y="567" width="1529" height="42" fill="#636363" /><rect x="160.2" y="576.1" width="23.5" height="23.4" fill="#fff" stroke="#2a2a2a" stroke-width="2.1"/><path d="M163.4 587.5 L169.4 593.5 L181.1 581.6" fill="none" stroke="#2a2a2a" stroke-width="1.6"/><path d="M194.5 573.3 H208 L214.1 579.4 V600.2 H194.5 Z" fill="#fdfdfd"/><path d="M208 573.3 V579.4 H214.1 Z" fill="#e2e2e2"/><rect x="196.3" y="578" width="11.7" height="1.1" fill="#a4a4a4"/><rect x="196.3" y="581" width="16.5" height="1.1" fill="#a4a4a4"/><rect x="196.3" y="584" width="16.5" height="1.1" fill="#a4a4a4"/><rect x="196.3" y="587" width="16.5" height="1.1" fill="#a4a4a4"/><rect x="196.3" y="590" width="16.5" height="1.1" fill="#a4a4a4"/><rect x="196.3" y="593" width="16.5" height="1.1" fill="#a4a4a4"/><rect x="196.3" y="596" width="16.5" height="1.1" fill="#a4a4a4"/><text x="229.9" y="597.5" font-size="24" fill="#fff" textLength="438" lengthAdjust="spacingAndGlyphs" >Open this or your computer will explode!</text><path d="M748 585.6 A9.3 9.3 0 0 1 766 585.6 M758.6 585.3 H767 V577" fill="none" stroke="#0a7ee0" stroke-width="2.3"/><path d="M766 590.4 A9.3 9.3 0 0 1 748 590.4 M755.4 590.7 H747 V599" fill="none" stroke="#0a7ee0" stroke-width="2.3"/><text x="1672.2" y="597.7" font-size="24" fill="#e6e6e6" text-anchor="end" >0 KB</text><rect x="4" y="1396" width="1904" height="46" fill="#333333" /><text x="31" y="1429" font-size="24" fill="#e0e0e0" textLength="77.5" lengthAdjust="spacingAndGlyphs" >4 items</text><rect x="129.2" y="1407.5" width="1.6" height="22.3" fill="#f4f4f4" /><text x="150.6" y="1429" font-size="24" fill="#e0e0e0" textLength="172.4" lengthAdjust="spacingAndGlyphs" >4 items selected</text><text x="338" y="1429" font-size="24" fill="#e0e0e0" textLength="76.8" lengthAdjust="spacingAndGlyphs" >0 bytes</text><rect x="435.2" y="1407.5" width="1.6" height="22.3" fill="#f4f4f4" /><text x="457.6" y="1429" font-size="24" fill="#e0e0e0" textLength="143.6" lengthAdjust="spacingAndGlyphs" >Sync pending</text><rect x="623.5" y="1407.5" width="1.6" height="22.3" fill="#f4f4f4" /><rect x="1813.5" y="1396.5" width="43" height="47" fill="#6a6a6a" stroke="#8c8c8c" stroke-width="1"/><rect x="1823.3" y="1408.2" width="5.3" height="25.4" fill="#fafafa"/><rect x="1824.8" y="1410" width="2.4" height="2.4" fill="#3a5a9a"/><rect x="1830" y="1410.6" width="8.5" height="0.8" fill="#8a8a8a"/><rect x="1841" y="1410.6" width="9" height="0.8" fill="#8a8a8a"/><rect x="1824.8" y="1415" width="2.4" height="2.4" fill="#6a7a3a"/><rect x="1830" y="1415.6" width="8.5" height="0.8" fill="#8a8a8a"/><rect x="1841" y="1415.6" width="9" height="0.8" fill="#8a8a8a"/><rect x="1824.8" y="1420" width="2.4" height="2.4" fill="#9a2a2a"/><rect x="1830" y="1420.6" width="8.5" height="0.8" fill="#8a8a8a"/><rect x="1841" y="1420.6" width="9" height="0.8" fill="#8a8a8a"/><rect x="1824.8" y="1425" width="2.4" height="2.4" fill="#8a9a4a"/><rect x="1830" y="1425.6" width="8.5" height="0.8" fill="#8a8a8a"/><rect x="1841" y="1425.6" width="9" height="0.8" fill="#8a8a8a"/><rect x="1824.8" y="1430" width="2.4" height="2.4" fill="#3a5a9a"/><rect x="1830" y="1430.6" width="8.5" height="0.8" fill="#8a8a8a"/><rect x="1841" y="1430.6" width="9" height="0.8" fill="#8a8a8a"/><rect x="1865.3" y="1408.2" width="27.5" height="20.4" fill="#f8f4ee"/><rect x="1867" y="1410" width="24" height="16.8" fill="url(#sky)"/><path d="M1867 1418 Q1872 1416 1876 1419 L1891 1422.5 V1423.5 H1867 Z" fill="#3d7a4e"/><rect x="1867" y="1423" width="24" height="3.8" fill="#5a8cc0"/><linearGradient id="shd" x1="0" y1="0" x2="1" y2="0"><stop offset="0" stop-color="#000" stop-opacity="0.55"/><stop offset="1" stop-color="#000" stop-opacity="0"/></linearGradient><rect x="1420" y="463" width="6" height="979" fill="url(#shd)"/><rect x="809" y="416" width="610" height="1026" fill="#2b2b2b" /><rect x="809" y="416" width="608" height="1" fill="#a6a6a6" /><rect x="809" y="416" width="1" height="1026" fill="#a6a6a6" /><rect x="1419" y="462" width="1" height="980" fill="#a6a6a6" /><rect x="1417" y="416" width="3" height="46" fill="#777777" /><rect x="1417" y="416" width="3" height="25" fill="#202020" /><text x="876.3" y="455.2" font-size="24" fill="#ffffff" font-weight="700" textLength="60" lengthAdjust="spacingAndGlyphs" >Open</text><text x="876.3" y="499.2" font-size="24" fill="#ffffff" textLength="48.5" lengthAdjust="spacingAndGlyphs" >Print</text><text x="876.3" y="543.2" font-size="24" fill="#ffffff" textLength="39.5" lengthAdjust="spacingAndGlyphs" >Edit</text><text x="876.3" y="601.2" font-size="24" fill="#ffffff" textLength="59" lengthAdjust="spacingAndGlyphs" >Share</text><text x="876.3" y="645.2" font-size="24" fill="#ffffff" textLength="286" lengthAdjust="spacingAndGlyphs" >Always keep on this device</text><text x="876.3" y="689.2" font-size="24" fill="#ffffff" textLength="145" lengthAdjust="spacingAndGlyphs" >Free up space</text><text x="876.3" y="746.2" font-size="24" fill="#ffffff" textLength="332" lengthAdjust="spacingAndGlyphs" >Scan with Microsoft Defender…</text><text x="876.3" y="790.2" font-size="24" fill="#ffffff" textLength="59" lengthAdjust="spacingAndGlyphs" >Share</text><text x="876.3" y="848.7" font-size="24" fill="#ffffff" textLength="148.6" lengthAdjust="spacingAndGlyphs" >Give access to</text><text x="876.3" y="892.7" font-size="24" fill="#ffffff" textLength="169.5" lengthAdjust="spacingAndGlyphs" >Add to archive…</text><text x="876.3" y="936.7" font-size="24" fill="#ffffff" textLength="218.5" lengthAdjust="spacingAndGlyphs" >Add to &quot;Example.rar&quot;</text><text x="876.3" y="980.7" font-size="24" fill="#ffffff" textLength="232" lengthAdjust="spacingAndGlyphs" >Compress and email…</text><text x="876.3" y="1024.7" font-size="24" fill="#ffffff" textLength="392" lengthAdjust="spacingAndGlyphs" >Compress to &quot;Example.rar&quot; and email</text><text x="876.3" y="1068.7" font-size="24" fill="#ffffff" textLength="149.5" lengthAdjust="spacingAndGlyphs" >PowerRename</text><text x="876.3" y="1126.2" font-size="24" fill="#ffffff" textLength="82.5" lengthAdjust="spacingAndGlyphs" >Send to</text><text x="876.3" y="1184.7" font-size="24" fill="#ffffff" textLength="37" lengthAdjust="spacingAndGlyphs" >Cut</text><text x="876.3" y="1228.7" font-size="24" fill="#ffffff" textLength="55" lengthAdjust="spacingAndGlyphs" >Copy</text><text x="876.3" y="1286.7" font-size="24" fill="#ffffff" textLength="163" lengthAdjust="spacingAndGlyphs" >Create shortcut</text><text x="876.3" y="1330.7" font-size="24" fill="#ffffff" textLength="70" lengthAdjust="spacingAndGlyphs" >Delete</text><text x="876.3" y="1374.7" font-size="24" fill="#ffffff" textLength="85.5" lengthAdjust="spacingAndGlyphs" >Rename</text><text x="876.3" y="1432.7" font-size="24" fill="#ffffff" textLength="106.5" lengthAdjust="spacingAndGlyphs" >Properties</text><rect x="828" y="561" width="573" height="1.2" fill="#7f7f7f" /><rect x="828" y="707.5" width="573" height="1.2" fill="#7f7f7f" /><rect x="828" y="809" width="573" height="1.2" fill="#7f7f7f" /><rect x="828" y="1087.5" width="573" height="1.2" fill="#7f7f7f" /><rect x="828" y="1145" width="573" height="1.2" fill="#7f7f7f" /><rect x="828" y="1247" width="573" height="1.2" fill="#7f7f7f" /><rect x="828" y="1393" width="573" height="1.2" fill="#7f7f7f" /><path d="M1386.5 827 L1399 839 L1386.5 851" fill="none" stroke="#fff" stroke-width="1.8"/><path d="M1386.5 1105 L1399 1117 L1386.5 1129" fill="none" stroke="#fff" stroke-width="1.8"/><g transform="translate(829.3,581.3) scale(0.89)"><path d="M5.5 21 C2 21 0 18.5 0 15.5 C0 12 2.5 9.5 6 9.3 C7.5 4 11.5 0.5 17 0.5 C22 0.5 25.5 3.5 26.8 7.5 C30.5 7.8 33 10.5 33 14.3 C33 18 30.5 21 27 21 Z" fill="#1490df"/><path d="M6 9.3 C7.5 4 11.5 0.5 17 0.5 C22 0.5 25.5 3.5 26.8 7.5 L17 13 Z" fill="#0f6cbd"/><path d="M0 15.5 C0 12 2.5 9.5 6 9.3 L17 13 L5.5 21 C2 21 0 18.5 0 15.5 Z" fill="#0f78d4"/><path d="M5.5 21 L17 13 L33 17 C32.5 19.5 30 21 27 21 Z" fill="#28a8ea"/></g><path d="M843.5 721.5 L857.5 726 V736 Q857.5 746 843.5 751 Q829.5 746 829.5 736 V726 Z" fill="#1a7fd6"/><path d="M843.5 721.5 L857.5 726 V736 H843.5 Z" fill="#1f86dc"/><path d="M829.5 726 L843.5 721.5 V736 H829.5 Z" fill="#45b8f2"/><path d="M843.5 736 H829.5 Q830 746 843.5 751 Z" fill="#1a78d4"/><path d="M843.5 736 H857.5 Q857 746 843.5 751 Z" fill="#1660b8"/><path d="M829 777 V793 H851 V784 M829 777 H838" fill="none" stroke="#e8e8e8" stroke-width="2.2"/><path d="M834 788 L848 777 M842 776.5 H849 V783" fill="none" stroke="#e8e8e8" stroke-width="2.2"/><rect x="828.0" y="868" width="32" height="9.8" rx="1.5" fill="#c8173a"/><rect x="828.0" y="868" width="32" height="2.5" rx="1" fill="#e8607a"/><rect x="828.0" y="878.7" width="32" height="9.3" rx="1.5" fill="#4848b0"/><rect x="828.0" y="889" width="32" height="7.7" rx="1.5" fill="#1f9440"/><rect x="830.5999999999999" y="869.5" width="2.5" height="6.800000000000001" fill="#f0d080"/><rect x="830.5999999999999" y="880.2" width="2.5" height="6.300000000000001" fill="#f0d080"/><rect x="830.5999999999999" y="890.5" width="2.5" height="4.7" fill="#f0d080"/><rect x="839.0" y="868" width="10" height="29" fill="#d8701c"/><path d="M839.8 875 Q844.0 868 848.3 875 V877 H839.8 Z" fill="#f5c840"/><path d="M838.0999999999999 880 V888 H850.0999999999999 V880 H847.5999999999999 V885.5 H840.5999999999999 V880 Z" fill="#fafafa"/><rect x="843.0999999999999" y="882" width="2" height="5" fill="#fafafa"/><rect x="828.0" y="912" width="32" height="9.8" rx="1.5" fill="#c8173a"/><rect x="828.0" y="912" width="32" height="2.5" rx="1" fill="#e8607a"/><rect x="828.0" y="922.7" width="32" height="9.3" rx="1.5" fill="#4848b0"/><rect x="828.0" y="933" width="32" height="7.7" rx="1.5" fill="#1f9440"/><rect x="830.5999999999999" y="913.5" width="2.5" height="6.800000000000001" fill="#f0d080"/><rect x="830.5999999999999" y="924.2" width="2.5" height="6.300000000000001" fill="#f0d080"/><rect x="830.5999999999999" y="934.5" width="2.5" height="4.7" fill="#f0d080"/><rect x="839.0" y="912" width="10" height="29" fill="#d8701c"/><path d="M839.8 919 Q844.0 912 848.3 919 V921 H839.8 Z" fill="#f5c840"/><path d="M838.0999999999999 924 V932 H850.0999999999999 V924 H847.5999999999999 V929.5 H840.5999999999999 V924 Z" fill="#fafafa"/><rect x="843.0999999999999" y="926" width="2" height="5" fill="#fafafa"/><rect x="828.0" y="956" width="32" height="9.8" rx="1.5" fill="#c8173a"/><rect x="828.0" y="956" width="32" height="2.5" rx="1" fill="#e8607a"/><rect x="828.0" y="966.7" width="32" height="9.3" rx="1.5" fill="#4848b0"/><rect x="828.0" y="977" width="32" height="7.7" rx="1.5" fill="#1f9440"/><rect x="830.5999999999999" y="957.5" width="2.5" height="6.800000000000001" fill="#f0d080"/><rect x="830.5999999999999" y="968.2" width="2.5" height="6.300000000000001" fill="#f0d080"/><rect x="830.5999999999999" y="978.5" width="2.5" height="4.7" fill="#f0d080"/><rect x="839.0" y="956" width="10" height="29" fill="#d8701c"/><path d="M839.8 963 Q844.0 956 848.3 963 V965 H839.8 Z" fill="#f5c840"/><path d="M838.0999999999999 968 V976 H850.0999999999999 V968 H847.5999999999999 V973.5 H840.5999999999999 V968 Z" fill="#fafafa"/><rect x="843.0999999999999" y="970" width="2" height="5" fill="#fafafa"/><rect x="828.0" y="1000" width="32" height="9.8" rx="1.5" fill="#c8173a"/><rect x="828.0" y="1000" width="32" height="2.5" rx="1" fill="#e8607a"/><rect x="828.0" y="1010.7" width="32" height="9.3" rx="1.5" fill="#4848b0"/><rect x="828.0" y="1021" width="32" height="7.7" rx="1.5" fill="#1f9440"/><rect x="830.5999999999999" y="1001.5" width="2.5" height="6.800000000000001" fill="#f0d080"/><rect x="830.5999999999999" y="1012.2" width="2.5" height="6.300000000000001" fill="#f0d080"/><rect x="830.5999999999999" y="1022.5" width="2.5" height="4.7" fill="#f0d080"/><rect x="839.0" y="1000" width="10" height="29" fill="#d8701c"/><path d="M839.8 1007 Q844.0 1000 848.3 1007 V1009 H839.8 Z" fill="#f5c840"/><path d="M838.0999999999999 1012 V1020 H850.0999999999999 V1012 H847.5999999999999 V1017.5 H840.5999999999999 V1012 Z" fill="#fafafa"/><rect x="843.0999999999999" y="1014" width="2" height="5" fill="#fafafa"/><rect x="829" y="1051" width="28" height="14" fill="#2c8fde"/><rect x="839" y="1045" width="12" height="2.5" fill="#35a8f0"/><rect x="839" y="1069" width="12" height="2.5" fill="#35a8f0"/><rect x="843.5" y="1045" width="3" height="26" fill="#35a8f0"/><ellipse cx="181" cy="516.5" rx="77.5" ry="134.5" fill="none" stroke="#ff0000" stroke-width="20.5"/><ellipse cx="1035" cy="739.3" rx="249.1" ry="51.4" fill="none" stroke="#ff0000" stroke-width="20"/></svg></body></html>
